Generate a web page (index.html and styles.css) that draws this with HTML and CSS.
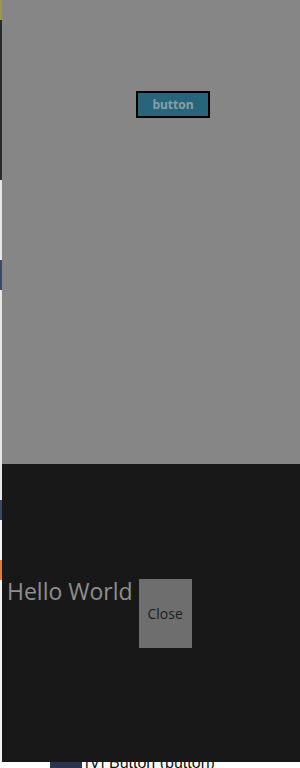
FILE: index.html
```html
<!DOCTYPE html>
<html>
  <head>
    <meta charset="utf-8"/>
    <title>test</title>
    <link rel="stylesheet" href="styles.css">
  </head>
  <body>
    <div class="page">
      <div class="strip">
        <div class="seg s1"></div>
        <div class="seg s2"></div>
        <div class="seg s3"></div>
        <div class="seg s4"></div>
        <div class="seg s5"></div>
        <div class="seg s6"></div>
        <div class="seg s7"></div>
        <div class="seg s8"></div>
        <div class="seg s9"></div>
      </div>
      <div class="overlay">
        <div class="top">
          <button class="btn">button</button>
        </div>
        <div class="modal">
          <div class="row">
            <span class="hello">Hello World</span>
            <button class="close">Close</button>
          </div>
        </div>
      </div>
    </div>
    <div class="under">
      <span class="box"></span>
      <span class="lbl">[V] Button (button)</span>
    </div>
  </body>
</html>
```

FILE: styles.css
```css
body{
  margin: 0;
  width: 300px;
  height: 768px;
  overflow: hidden;
  background-color: #fff;
  font-family: "Open Sans", sans-serif;
}
.page{
  display: flex;
  height: 762px;
}
.strip{
  width: 2px;
  display: flex;
  flex-direction: column;
}
.seg{ width: 2px; }
.s1{ height: 20px; background-color: #9a9a40; }
.s2{ height: 160px; background-color: #2a2a2a; }
.s3{ height: 80px; background-color: #e6e6e6; }
.s4{ height: 30px; background-color: #3a4a60; }
.s5{ height: 210px; background-color: #e8e8e8; }
.s6{ height: 20px; background-color: #3a4a60; }
.s7{ height: 40px; background-color: #f4f4f4; }
.s8{ height: 20px; background-color: #e08030; }
.s9{ flex: 1; background-color: #f2f2f2; }
.overlay{
  width: 298px;
  display: flex;
  flex-direction: column;
}
.top{
  height: 464px;
  background-color: #868686;
  padding-top: 91px;
  padding-left: 134px;
  box-sizing: border-box;
}
.btn{
  width: 74px;
  height: 27px;
  background-color: #27657b;
  border: solid #000 2px;
  color: #8c9ea5;
  font-family: "Open Sans", sans-serif;
  font-weight: bold;
  font-size: 12px;
  padding: 0;
}
.modal{
  flex: 1;
  background-color: #181818;
  padding-top: 115px;
  padding-left: 5px;
}
.row{
  display: flex;
  align-items: flex-start;
  gap: 6px;
}
.hello{
  color: #8e8e8e;
  font-size: 23px;
  line-height: 24px;
}
.close{
  width: 53px;
  height: 69px;
  background-color: #6e6e6e;
  border: 0;
  color: #1c1c1c;
  font-family: "Open Sans", sans-serif;
  font-size: 14px;
  padding: 0;
}
.under{
  height: 6px;
  display: flex;
  align-items: flex-start;
  overflow: hidden;
  background-color: #fff;
}
.box{
  width: 32px;
  height: 6px;
  margin-left: 50px;
  background-color: #2c3550;
}
.lbl{
  margin-left: 3px;
  margin-top: -8px;
  font-family: "Liberation Sans", sans-serif;
  font-size: 16px;
  color: #111;
}
```
